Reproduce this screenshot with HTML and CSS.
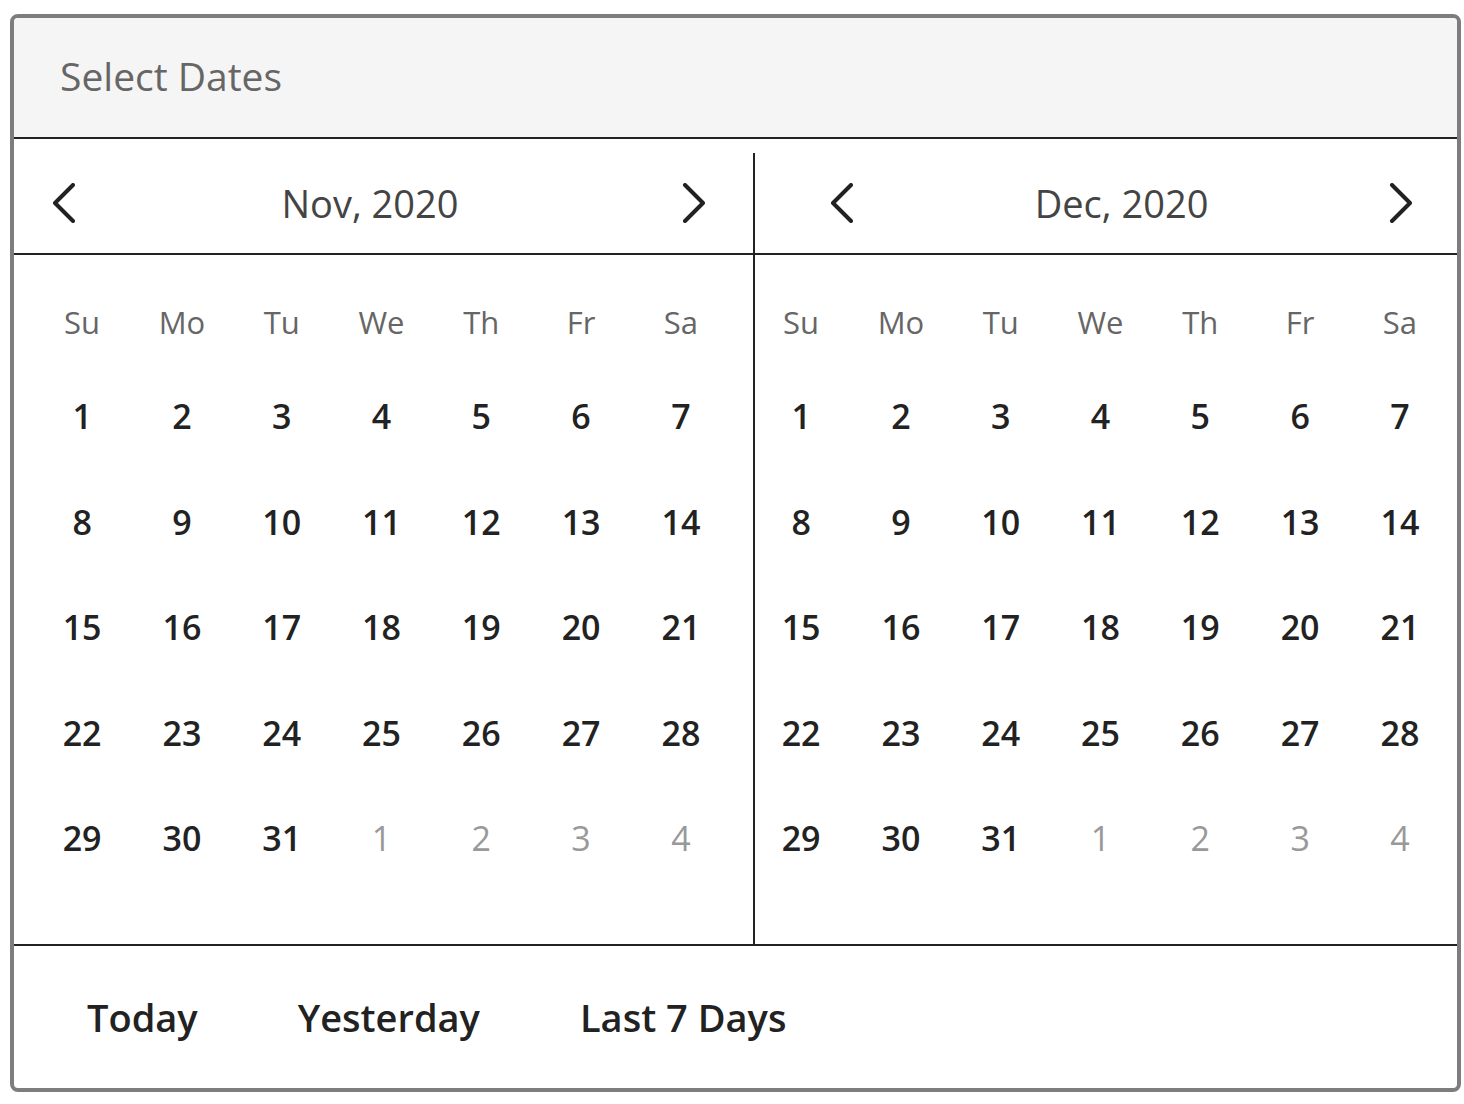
FILE: index.html
```html
<!DOCTYPE html>
<html lang="en">
<head>
    <meta charset="UTF-8">
    <meta name="viewport" content="width=device-width, initial-scale=1.0">
    <title>Select Dates</title>
    <link rel="stylesheet" href="styles.css">
</head>
<body>

    <div class="picker">
        <div class="picker-header">Select Dates</div>

        <div class="months">
            <!-- November -->
            <div class="month month-left">
                <div class="month-nav">
                    <button class="nav-button" aria-label="Previous month">
                        <svg width="24" height="40" viewBox="0 0 24 40"><path d="M21 2 L3 20 L21 38"/></svg>
                    </button>
                    <div class="month-title">Nov, 2020</div>
                    <button class="nav-button" aria-label="Next month">
                        <svg width="24" height="40" viewBox="0 0 24 40"><path d="M3 2 L21 20 L3 38"/></svg>
                    </button>
                </div>
                <div class="weekdays">
                    <span>Su</span><span>Mo</span><span>Tu</span><span>We</span><span>Th</span><span>Fr</span><span>Sa</span>
                </div>
                <div class="days">
                    <span>1</span><span>2</span><span>3</span><span>4</span><span>5</span><span>6</span><span>7</span>
                    <span>8</span><span>9</span><span>10</span><span>11</span><span>12</span><span>13</span><span>14</span>
                    <span>15</span><span>16</span><span>17</span><span>18</span><span>19</span><span>20</span><span>21</span>
                    <span>22</span><span>23</span><span>24</span><span>25</span><span>26</span><span>27</span><span>28</span>
                    <span>29</span><span>30</span><span>31</span><span class="muted">1</span><span class="muted">2</span><span class="muted">3</span><span class="muted">4</span>
                </div>
            </div>

            <!-- December -->
            <div class="month month-right">
                <div class="month-nav">
                    <button class="nav-button" aria-label="Previous month">
                        <svg width="24" height="40" viewBox="0 0 24 40"><path d="M21 2 L3 20 L21 38"/></svg>
                    </button>
                    <div class="month-title">Dec, 2020</div>
                    <button class="nav-button" aria-label="Next month">
                        <svg width="24" height="40" viewBox="0 0 24 40"><path d="M3 2 L21 20 L3 38"/></svg>
                    </button>
                </div>
                <div class="weekdays">
                    <span>Su</span><span>Mo</span><span>Tu</span><span>We</span><span>Th</span><span>Fr</span><span>Sa</span>
                </div>
                <div class="days">
                    <span>1</span><span>2</span><span>3</span><span>4</span><span>5</span><span>6</span><span>7</span>
                    <span>8</span><span>9</span><span>10</span><span>11</span><span>12</span><span>13</span><span>14</span>
                    <span>15</span><span>16</span><span>17</span><span>18</span><span>19</span><span>20</span><span>21</span>
                    <span>22</span><span>23</span><span>24</span><span>25</span><span>26</span><span>27</span><span>28</span>
                    <span>29</span><span>30</span><span>31</span><span class="muted">1</span><span class="muted">2</span><span class="muted">3</span><span class="muted">4</span>
                </div>
            </div>
        </div>

        <div class="presets">
            <button class="preset">Today</button>
            <button class="preset">Yesterday</button>
            <button class="preset">Last 7 Days</button>
        </div>
    </div>

</body>
</html>
```

FILE: styles.css
```css
body {
    font-family: "Open Sans", sans-serif;
    margin: 14px 0 0 10px;
    background-color: #fff;
}
.picker {
    width: 1451px;
    height: 1078px;
    box-sizing: border-box;
    border: 4px solid #7d7d7d;
    border-radius: 8px;
    display: flex;
    flex-direction: column;
    overflow: hidden;
}
.picker-header {
    height: 121px;
    flex-shrink: 0;
    box-sizing: border-box;
    display: flex;
    align-items: center;
    padding: 0 0 4px 46px;
    background-color: #f5f5f5;
    border-bottom: 2px solid #222;
    font-size: 39px;
    color: #666;
}
.months {
    flex: 1;
    display: flex;
    padding-top: 14px;
}
.month {
    display: flex;
    flex-direction: column;
}
.month-left {
    width: 739px;
    flex-shrink: 0;
    border-right: 2px solid #222;
}
.month-right {
    flex: 1;
    min-width: 0;
}
.month-nav {
    height: 100px;
    display: flex;
    align-items: center;
    border-bottom: 2px solid #222;
}
.month-left .month-nav {
    padding: 0 47px 0 38px;
}
.month-right .month-nav {
    padding: 0 44px 0 75px;
}
.month-title {
    flex: 1;
    text-align: center;
    font-size: 38px;
    color: #444;
}
.month-left .month-title {
    padding-right: 18px;
}
.nav-button {
    padding: 0;
    border: none;
    background: none;
    cursor: pointer;
    display: flex;
}
.nav-button path {
    fill: none;
    stroke: #222;
    stroke-width: 4;
    stroke-linecap: round;
    stroke-linejoin: round;
}
.weekdays, .days {
    display: grid;
    grid-template-columns: repeat(7, 99.8px);
    justify-content: center;
    text-align: center;
}
.month-left .weekdays, .month-left .days {
    padding-right: 4px;
}
.month-right .weekdays, .month-right .days {
    padding-right: 11px;
}
.weekdays {
    margin-top: 37px;
    grid-auto-rows: 60px;
    align-items: center;
    font-size: 31px;
    color: #666;
}
.days {
    margin-top: 34px;
    grid-auto-rows: 60px;
    row-gap: 45.5px;
    align-items: center;
    font-size: 34px;
    font-weight: 600;
    color: #222;
}
.days .muted {
    font-weight: normal;
    color: #999;
}
.presets {
    height: 142px;
    flex-shrink: 0;
    display: flex;
    align-items: center;
    gap: 100px;
    padding-left: 73px;
    border-top: 2px solid #222;
}
.preset {
    padding: 0;
    border: none;
    background: none;
    cursor: pointer;
    font-family: inherit;
    font-size: 38px;
    font-weight: 600;
    color: #222;
}
```
